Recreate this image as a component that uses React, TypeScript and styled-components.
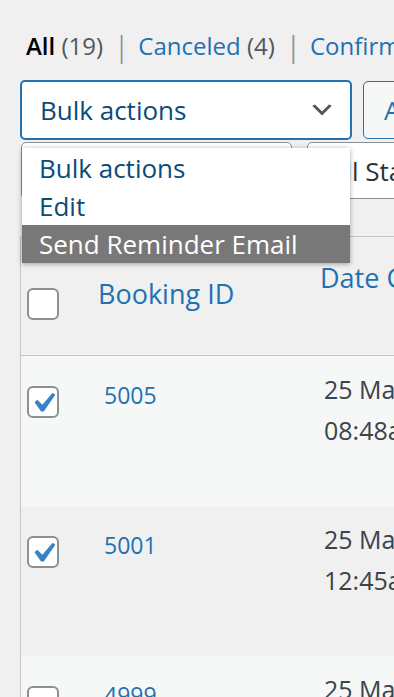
import * as React from "react";
import styled, { createGlobalStyle } from "styled-components";

const Global = createGlobalStyle`
  html, body {
    margin: 0;
    padding: 0;
    background: #f0f0f1;
    overflow: hidden;
  }
  body {
    font-family: "Open Sans", "Noto Sans", sans-serif;
    color: #3c434a;
  }
`;

const Page = styled.div`
  width: 394px;
  height: 697px;
  overflow: hidden;
  padding: 28px 0 0 20px;
  box-sizing: border-box;
`;

const StatusLinks = styled.ul`
  display: flex;
  margin: 0 0 0 6px;
  padding: 0;
  list-style: none;
  white-space: nowrap;
  font-size: 24px;
  line-height: 36px;
  color: #646970;
`;

const StatusItem = styled.li<{ $current?: boolean }>`
  a {
    color: ${(p) => (p.$current ? "#000" : "#2271b1")};
    font-weight: ${(p) => (p.$current ? 600 : 400)};
    text-decoration: none;
  }
`;

const Sep = styled.span`
  display: inline-block;
  color: #8c8f94;
  margin: 0 10px 0 12px;
  transform: scaleY(1.2);
`;

const Count = styled.span`
  color: #50575e;
  font-weight: 400;
`;

const Toolbar = styled.div`
  display: flex;
  gap: 11px;
  margin-top: 16px;
  width: 600px;
`;

const SelectWrap = styled.div`
  position: relative;
`;

const Select = styled.div<{ $focused?: boolean; $width: number; $pad?: number }>`
  display: flex;
  align-items: center;
  justify-content: space-between;
  box-sizing: border-box;
  width: ${(p) => p.$width}px;
  height: ${(p) => (p.$focused ? 60 : 57)}px;
  padding: 0 14px 0 ${(p) => p.$pad ?? 18}px;
  background: #fff;
  border: ${(p) => (p.$focused ? "2px solid #2271b1" : "1px solid #8c8f94")};
  border-radius: 5px;
  font-size: 26px;
  color: ${(p) => (p.$focused ? "#0a4b78" : "#2c3338")};
  white-space: nowrap;
`;

const Button = styled.div`
  display: flex;
  align-items: center;
  box-sizing: border-box;
  height: 58px;
  margin-top: 1px;
  padding: 0 20px;
  background: #f6f7f7;
  border: 1px solid #2271b1;
  border-radius: 5px;
  color: #2271b1;
  font-size: 26px;
`;

const FilterRow = styled.div`
  display: flex;
  gap: 15px;
  margin: 2px 0 0 1px;
  width: 600px;
`;

const Menu = styled.ul`
  position: absolute;
  top: 68px;
  left: 2px;
  z-index: 5;
  width: 328px;
  margin: 0;
  padding: 1px 0 0;
  list-style: none;
  background: #fff;
  box-shadow: 0 1px 5px rgba(0, 0, 0, 0.35);
`;

const MenuItem = styled.li<{ $active?: boolean }>`
  height: 38px;
  line-height: 38px;
  padding-left: 17px;
  font-size: 26px;
  background: ${(p) => (p.$active ? "#787878" : "transparent")};
  color: ${(p) => (p.$active ? "#fff" : "#0a4b78")};
`;

const Table = styled.div`
  margin-top: 37px;
  width: 700px;
  border-left: 1px solid #c3c4c7;
  border-top: 1px solid #c3c4c7;
  display: grid;
  grid-template-columns: 66px 221px 1fr;
`;

const HeadCell = styled.div<{ $top: number; $left: number }>`
  height: 119px;
  box-sizing: border-box;
  padding: ${(p) => p.$top}px 0 0 ${(p) => p.$left}px;
  background: #f0f0f1;
  border-bottom: 1px solid #c3c4c7;
  font-size: 27px;
  line-height: 36px;
  color: #2271b1;
  white-space: nowrap;
`;

const Cell = styled.div<{ $alt: boolean; $top: number; $left: number }>`
  height: 150px;
  box-sizing: border-box;
  padding: ${(p) => p.$top}px 0 0 ${(p) => p.$left}px;
  background: ${(p) => (p.$alt ? "#f0f0f1" : "#f6f7f7")};
  font-size: 23px;
  line-height: 41px;
  white-space: nowrap;
`;

const IdLink = styled.span`
  color: #2271b1;
`;

const DateText = styled.div`
  color: #3c434a;
  font-size: 25px;
`;

const Box = styled.div`
  width: 32px;
  height: 32px;
  box-sizing: border-box;
  border: 2px solid #8c8f94;
  border-radius: 6px;
  background: #fff;
  display: flex;
  align-items: center;
  justify-content: center;
`;

function Checkbox({ checked }: { checked?: boolean }) {
  return (
    <Box>
      {checked && (
        <svg width="40" height="40" viewBox="0 0 20 20" style={{ flex: "none", marginTop: 1 }}>
          <path
            d="M14.83 4.89l1.34.94-5.81 8.38H9.02L5.78 9.67l1.34-1.25 2.57 2.4z"
            fill="#3582c4"
          />
        </svg>
      )}
    </Box>
  );
}

function Chevron() {
  return (
    <svg width="28" height="28" viewBox="0 0 20 20">
      <path d="M5 6l5 5 5-5 2 1-7 7-7-7 2-1z" fill="#50575e" />
    </svg>
  );
}

const rows = [
  { id: "5005", date: "25 Mar 2024", time: "08:48am", checked: true },
  { id: "5001", date: "25 Mar 2024", time: "12:45am", checked: true },
  { id: "4999", date: "25 Mar 2024", time: "12:30am", checked: false },
];

export default function App() {
  return (
    <>
      <Global />
      <Page>
        <StatusLinks>
          <StatusItem $current>
            <a>All</a> <Count>(19)</Count>
            <Sep>|</Sep>
          </StatusItem>
          <StatusItem>
            <a>Canceled</a> <Count>(4)</Count>
            <Sep>|</Sep>
          </StatusItem>
          <StatusItem>
            <a>Confirmed</a> <Count>(12)</Count>
          </StatusItem>
        </StatusLinks>

        <Toolbar>
          <SelectWrap>
            <Select $focused $width={332}>
              Bulk actions
              <Chevron />
            </Select>
            <Menu>
              <MenuItem>Bulk actions</MenuItem>
              <MenuItem>Edit</MenuItem>
              <MenuItem $active>Send Reminder Email</MenuItem>
            </Menu>
          </SelectWrap>
          <Button>Apply</Button>
        </Toolbar>

        <FilterRow>
          <Select $width={271} $pad={14}>
            All dates
            <Chevron />
          </Select>
          <Select $width={240} $pad={21}>
            All Statuses
            <Chevron />
          </Select>
        </FilterRow>

        <Table>
          <HeadCell $top={51} $left={6}>
            <Checkbox />
          </HeadCell>
          <HeadCell $top={39} $left={11}>
            Booking ID
          </HeadCell>
          <HeadCell $top={23} $left={12}>
            Date Created
          </HeadCell>
          {rows.map((r, i) => (
            <React.Fragment key={r.id}>
              <Cell $alt={i % 2 === 1} $top={30} $left={6}>
                <Checkbox checked={r.checked} />
              </Cell>
              <Cell $alt={i % 2 === 1} $top={19} $left={17}>
                <IdLink>{r.id}</IdLink>
              </Cell>
              <Cell $alt={i % 2 === 1} $top={13} $left={16}>
                <DateText>{r.date}</DateText>
                <DateText>{r.time}</DateText>
              </Cell>
            </React.Fragment>
          ))}
        </Table>
      </Page>
    </>
  );
}
